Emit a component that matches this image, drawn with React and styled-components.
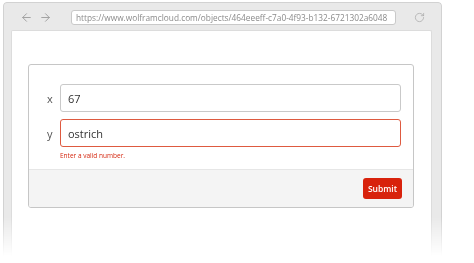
import React from "react";
import styled, { createGlobalStyle } from "styled-components";
import { ArrowLeft, ArrowRight, RotateCw } from "lucide-react";

const GlobalStyle = createGlobalStyle`
  html, body {
    margin: 0;
    background: #fff;
    font-family: "Open Sans", "Liberation Sans", sans-serif;
  }
`;

const App = () => {
  return (
    <Page>
      <GlobalStyle />
      <BrowserFrame>
        <Toolbar>
          <NavButtons>
            <ArrowLeft size={13} strokeWidth={1.8} />
            <ArrowRight size={13} strokeWidth={1.8} />
          </NavButtons>
          <UrlBar>
            https://www.wolframcloud.com/objects/464eeeff-c7a0-4f93-b132-6721302a6048
          </UrlBar>
          <Reload>
            <RotateCw size={11} strokeWidth={1.6} />
          </Reload>
        </Toolbar>
        <Viewport>
          <FormCard>
            <Fields>
              <Field>
                <Label>x</Label>
                <Input value="67" readOnly />
              </Field>
              <Field>
                <Label>y</Label>
                <Input value="ostrich" readOnly $error />
              </Field>
              <ErrorText>Enter a valid number.</ErrorText>
            </Fields>
            <Footer>
              <SubmitButton>Submit</SubmitButton>
            </Footer>
          </FormCard>
        </Viewport>
      </BrowserFrame>
    </Page>
  );
};

const Page = styled.div`
  padding: 2px 0 0 3px;
  height: 261px;
  overflow: hidden;
`;

const BrowserFrame = styled.div`
  width: 437px;
  height: 261px;
  background: #e9e9e9;
  border: 1px solid #d2d2d2;
  border-bottom: none;
  border-radius: 4px 4px 0 0;
  display: flex;
  flex-direction: column;
  -webkit-mask-image: linear-gradient(to bottom, #000 82%, transparent 97%);
  mask-image: linear-gradient(to bottom, #000 82%, transparent 97%);
`;

const Toolbar = styled.div`
  height: 27px;
  display: flex;
  align-items: center;
  padding: 2px 0 0 16px;
  box-sizing: border-box;
`;

const NavButtons = styled.div`
  display: flex;
  gap: 6px;
  color: #a0a0a0;
  width: 51px;
`;

const UrlBar = styled.div`
  width: 325px;
  height: 15px;
  box-sizing: border-box;
  background: #fff;
  border: 1px solid #c9c9c9;
  border-radius: 3px;
  font-size: 8.3px;
  line-height: 13px;
  color: #8a8a8a;
  padding-left: 4px;
  white-space: nowrap;
  overflow: hidden;
`;

const Reload = styled.div`
  display: flex;
  color: #a8a8a8;
  margin-left: 18px;
`;

const Viewport = styled.div`
  flex: 1;
  background: #fff;
  margin: 0 9px 0 7px;
  border: 1px solid #dcdcdc;
  border-bottom: none;
  border-radius: 2px 2px 0 0;
  padding: 33px 17px 0 16px;
`;

const FormCard = styled.div`
  border: 1px solid #c6c6c6;
  border-radius: 3px;
  background: #fff;
  overflow: hidden;
`;

const Fields = styled.div`
  padding: 19px 12px 0 18px;
  height: 104px;
  box-sizing: border-box;
  display: flex;
  flex-direction: column;
`;

const Field = styled.div`
  display: flex;
  align-items: center;
  margin-bottom: 7px;
`;

const Label = styled.span`
  width: 13px;
  font-size: 11px;
  color: #555;
`;

const Input = styled.input`
  flex: 1;
  height: 28px;
  box-sizing: border-box;
  border: 1px solid ${(p) => (p.$error ? "#de5a40" : "#c9c9c9")};
  border-radius: 3px;
  padding: 0 7px;
  font-family: "Open Sans", "Liberation Sans", sans-serif;
  font-size: 11px;
  color: #333;
  outline: none;
  background: #fff;
`;

const ErrorText = styled.div`
  margin: -3px 0 0 13px;
  font-size: 6.5px;
  color: #d4260e;
`;

const Footer = styled.div`
  background: #f4f4f4;
  border-top: 1px solid #e6e6e6;
  height: 38px;
  box-sizing: border-box;
  display: flex;
  justify-content: flex-end;
  align-items: center;
  padding-right: 11px;
`;

const SubmitButton = styled.button`
  width: 39px;
  height: 21px;
  border: none;
  border-radius: 3px;
  background: #d8220c;
  color: #fff;
  font-family: "Open Sans", "Liberation Sans", sans-serif;
  font-size: 8.5px;
  font-weight: 600;
  padding: 0;
`;

export default App;
